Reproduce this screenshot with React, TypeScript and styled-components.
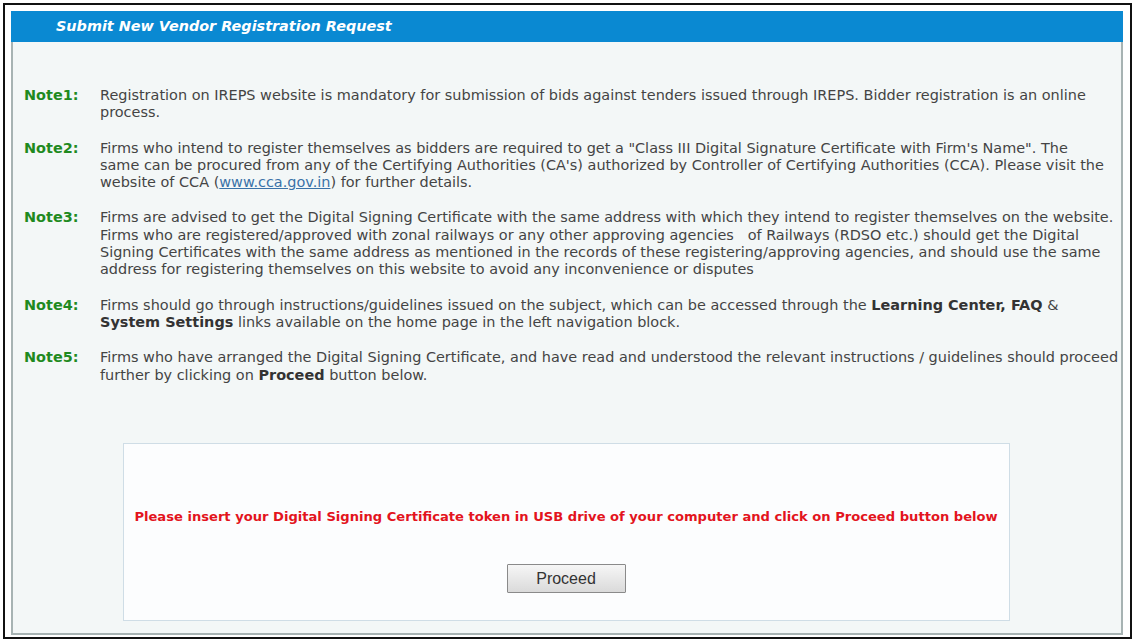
import React from "react";
import styled, { createGlobalStyle } from "styled-components";

const GlobalStyle = createGlobalStyle`
    html, body {
        margin: 0;
        padding: 0;
        background: #ffffff;
    }
    body {
        font-family: "DejaVu Sans", Verdana, sans-serif;
    }
`;

const Frame = styled.div`
    margin: 3px 3px 0 3px;
    height: 624px;
    border: 2px solid #111;
    padding: 6px 7px 2px 6px;
    box-sizing: content-box;
    display: flex;
`;

const Panel = styled.div`
    flex: 1;
    display: flex;
    flex-direction: column;
    background: #f3f7f7;
    border: 2px solid #a7b3b3;
    border-top: none;
`;

const Header = styled.div`
    height: 31px;
    margin: 0 -2px;
    background: #0a89d2;
    color: #ffffff;
    font-weight: bold;
    font-style: italic;
    font-size: 14.4px;
    line-height: 31px;
    padding-left: 45px;
`;

const Content = styled.div`
    flex: 1;
    display: flex;
    flex-direction: column;
    padding: 45px 2px 12px 0;
`;

const NoteList = styled.div`
    display: flex;
    flex-direction: column;
    gap: 18px;
    padding-left: 11px;
`;

const NoteRow = styled.div`
    display: grid;
    grid-template-columns: 76px 1fr;
    font-size: 14.45px;
    line-height: 17.3px;
`;

const NoteLabel = styled.span`
    color: #1f8a1f;
    font-weight: bold;
`;

const NoteText = styled.span`
    color: #444;
    b {
        color: #333;
    }
`;

const NoWrap = styled.span`
    white-space: nowrap;
`;

const Link = styled.a`
    color: #3a72a8;
    text-decoration: underline;
`;

const TokenBox = styled.div`
    margin: auto auto 0 auto;
    width: 887px;
    height: 178px;
    border: 1px solid #cfdde6;
    background: #fcfdfe;
    display: flex;
    flex-direction: column;
    align-items: center;
    padding-top: 64px;
    box-sizing: border-box;
`;

const Warning = styled.div`
    color: #e3141d;
    font-weight: bold;
    font-size: 13.1px;
    line-height: 17px;
`;

const ProceedButton = styled.button`
    margin-top: 39px;
    width: 119px;
    height: 29px;
    border: 1px solid #8a8a8a;
    border-radius: 1px;
    background: linear-gradient(#f6f6f6, #dadada);
    color: #333;
    font-family: "Liberation Sans", Arial, sans-serif;
    font-size: 16px;
    padding: 0;
`;

interface INote {
    label: string;
    body: React.ReactNode;
}

const getNotes = (): Array<INote> => [
    {
        label: "Note1:",
        body: (
            <>
                Registration on IREPS website is mandatory for submission of bids against tenders issued
                through IREPS. Bidder registration is an online process.
            </>
        ),
    },
    {
        label: "Note2:",
        body: (
            <>
                Firms who intend to register themselves as bidders are required to get a "Class III Digital
                Signature Certificate with Firm's Name". The <NoWrap>same can</NoWrap> be procured from any of
                the Certifying Authorities (CA's) authorized by Controller of Certifying Authorities (CCA).
                Please visit the website of CCA (<Link href="#">www.cca.gov.in</Link>) for further details.
            </>
        ),
    },
    {
        label: "Note3:",
        body: (
            <>
                Firms are advised to get the Digital Signing Certificate with the same address with which they
                intend to register themselves on the website. Firms who are registered/approved with zonal
                railways or any other approving agencies &nbsp; of Railways (RDSO etc.) should get the Digital
                Signing Certificates with the same address as mentioned in the records of these
                registering/approving agencies, and should use the same address for registering themselves on
                this website to avoid any inconvenience or disputes
            </>
        ),
    },
    {
        label: "Note4:",
        body: (
            <>
                Firms should go through instructions/guidelines issued on the subject, which can be accessed
                through the <b>Learning Center, FAQ</b> &amp; <b>System Settings</b> links available on the home
                page in the left navigation block.
            </>
        ),
    },
    {
        label: "Note5:",
        body: (
            <>
                Firms who have arranged the Digital Signing Certificate, and have read and understood the
                relevant instructions / guidelines should proceed further by clicking on <b>Proceed</b> button
                below.
            </>
        ),
    },
];

export default function App() {
    const notes = getNotes();
    return (
        <>
            <GlobalStyle />
            <Frame>
                <Panel>
                    <Header>Submit New Vendor Registration Request</Header>
                    <Content>
                        <NoteList>
                            {notes.map((note) => (
                                <NoteRow key={note.label}>
                                    <NoteLabel>{note.label}</NoteLabel>
                                    <NoteText>{note.body}</NoteText>
                                </NoteRow>
                            ))}
                        </NoteList>
                        <TokenBox>
                            <Warning>
                                Please insert your Digital Signing Certificate token in USB drive of your computer
                                and click on Proceed button below
                            </Warning>
                            <ProceedButton type="button">Proceed</ProceedButton>
                        </TokenBox>
                    </Content>
                </Panel>
            </Frame>
        </>
    );
}
